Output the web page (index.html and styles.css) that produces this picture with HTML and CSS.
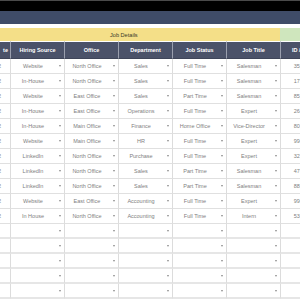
FILE: index.html
```html
<!DOCTYPE html>
<html>
<head>
<meta charset="utf-8">
<link rel="stylesheet" href="styles.css">
</head>
<body>
<div class="page">
  <div class="topbar"></div>
  <div class="navbar"></div>
  <div class="spacer"></div>
  <div class="group-row">
    <div class="group job">Job Details</div>
    <div class="group id"></div>
  </div>
  <div class="sheet" id="sheet">
    <div class="hd first">te</div>
    <div class="hd">Hiring Source</div>
    <div class="hd">Office</div>
    <div class="hd">Department</div>
    <div class="hd">Job Status</div>
    <div class="hd">Job Title</div>
    <div class="hd last">ID / Number</div>
  </div>
</div>
<script src="app.js"></script>
</body>
</html>
```
FILE: styles.css
```css
* { box-sizing: border-box; }
html, body { margin: 0; padding: 0; background: #fff; overflow: hidden; }
.page {
  width: 300px;
  height: 300px;
  overflow: hidden;
  font-family: "Liberation Sans", Arial, sans-serif;
}
.topbar { height: 11px; background: #000; border-top: 1px solid #4a4a4a; }
.navbar { height: 13px; background: #3f4c68; }
.spacer { height: 4px; background: #fff; }
.group-row { display: flex; height: 13px; }
.group { font-size: 5.6px; color: #3a3a2a; display: flex; align-items: center; }
.group.job { width: 280px; background: #f4df88; padding-left: 110px; }
.group.id { flex: 1; background: #cfe6bd; }
.sheet {
  display: grid;
  grid-template-columns: 11px repeat(6, 54px);
  grid-template-rows: 18px;
  grid-auto-rows: 15px;
  width: 335px;
}
.hd {
  background: #4b5269;
  color: #fff;
  font-weight: bold;
  font-size: 5.5px;
  display: flex;
  align-items: center;
  justify-content: center;
  border-right: 1px solid #9a9fae;
  border-top: 1px solid #fff;
  border-bottom: 1px solid #3f4559;
  white-space: nowrap;
  overflow: hidden;
}
.hd.first { justify-content: flex-end; padding-right: 2px; }
.cell {
  position: relative;
  border-right: 1px solid #dcdcdc;
  border-bottom: 1px solid #e0e0e0;
  font-size: 5.5px;
  color: #808080;
  display: flex;
  align-items: center;
  justify-content: center;
  padding-right: 9px;
  white-space: nowrap;
  overflow: hidden;
}
.cell.first { padding-right: 0; justify-content: flex-end; }
.cell.first span { margin-right: 9px; }
.arrow {
  position: absolute;
  right: 3px;
  top: 6px;
  width: 0;
  height: 0;
  border-left: 1.5px solid transparent;
  border-right: 1.5px solid transparent;
  border-top: 2px solid #8a8a8a;
}
.cell.empty { background: #fff; border-bottom: 2px solid #e6e6e6; }
```
FILE: app.js
```js
var rows = [
  ["Website","North Office","Sales","Full Time","Salesman","355478"],
  ["In-House","North Office","Sales","Full Time","Salesman","175213"],
  ["Website","East Office","Sales","Part Time","Salesman","853141"],
  ["In-House","East Office","Operations","Full Time","Expert","264587"],
  ["In-House","Main Office","Finance","Home Office","Vice-Director","803412"],
  ["Website","Main Office","HR","Full Time","Expert","994521"],
  ["LinkedIn","North Office","Purchase","Full Time","Expert","321457"],
  ["LinkedIn","North Office","Sales","Part Time","Salesman","478521"],
  ["LinkedIn","North Office","Sales","Part Time","Salesman","885412"],
  ["Website","East Office","Accounting","Full Time","Expert","996541"],
  ["In House","North Office","Accounting","Full Time","Intern","533214"]
];
var sheet = document.getElementById('sheet');
function cell(text, cls, arrow) {
  var d = document.createElement('div');
  d.className = 'cell' + (cls ? ' ' + cls : '');
  if (text) { var s = document.createElement('span'); s.textContent = text; d.appendChild(s); }
  if (arrow) { var a = document.createElement('i'); a.className = 'arrow'; d.appendChild(a); }
  sheet.appendChild(d);
}
rows.forEach(function (r) {
  cell('2', 'first', false);
  for (var i = 0; i < 5; i++) cell(r[i], '', true);
  cell(r[5], '', false);
});
for (var k = 0; k < 5; k++) {
  cell('', 'first empty', false);
  for (var j = 0; j < 5; j++) cell('', 'empty', true);
  cell('', 'empty', false);
}
```
